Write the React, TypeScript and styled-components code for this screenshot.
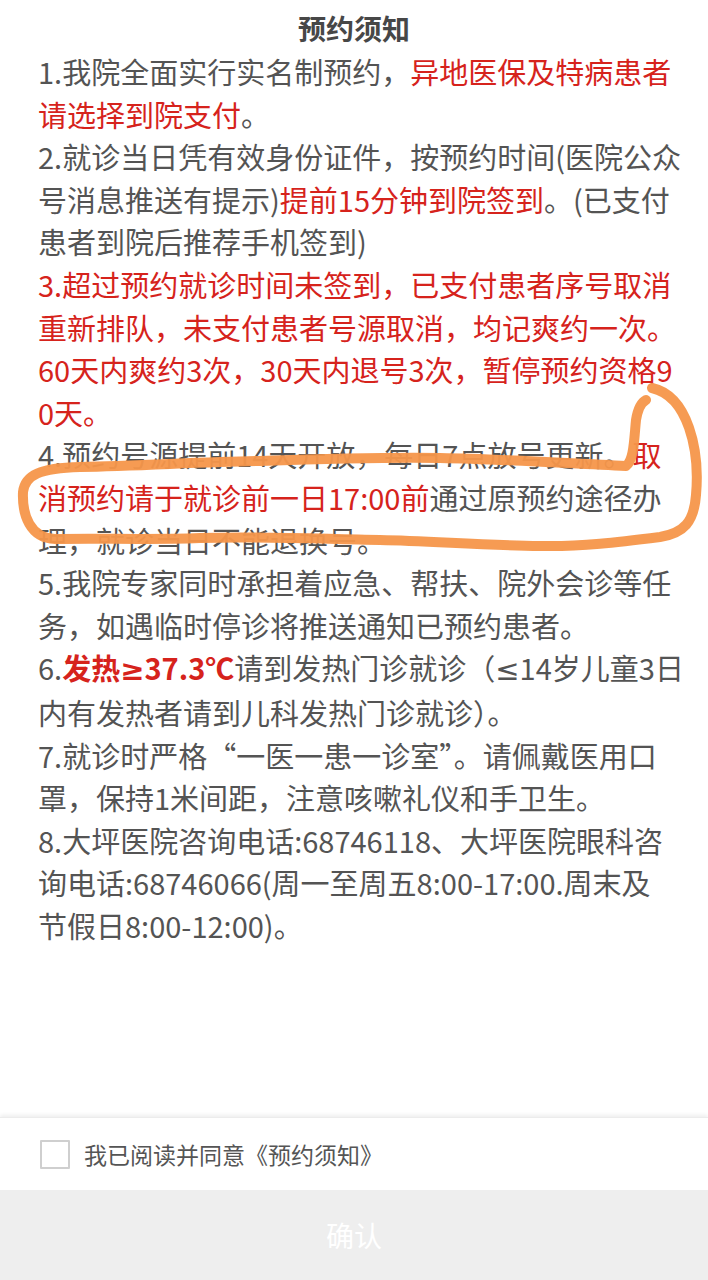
import React from "react";
import styled, { createGlobalStyle } from "styled-components";

const Global = createGlobalStyle`
  html, body { margin: 0; padding: 0; background: #fff; }
  body { font-family: "Noto Sans CJK SC", "Noto Sans", sans-serif; }
  * { box-sizing: border-box; }
`;

const Page = styled.div`
  position: relative;
  width: 708px;
  height: 1280px;
  display: flex;
  flex-direction: column;
  background: #fff;
  overflow: hidden;
`;

const Content = styled.div`
  flex: 1;
  padding: 6px 38px 0 38px;
`;

const Title = styled.h1`
  margin: 0;
  text-align: center;
  font-size: 28px;
  font-weight: 700;
  line-height: 44px;
  color: #474747;
`;

const Item = styled.p`
  margin: 0;
  font-size: 29px;
  line-height: 42.6px;
  color: #545454;
  white-space: nowrap;
`;

const Red = styled.span<{ $bold?: boolean }>`
  color: #d6231c;
  font-weight: ${(p) => (p.$bold ? 700 : 400)};
`;

const Sym = styled.span`
  font-family: "Noto Sans", "DejaVu Sans", sans-serif;
`;

const Footer = styled.div`
  display: flex;
  flex-direction: column;
  box-shadow: 0 -2px 4px rgba(0, 0, 0, 0.07);
  border-top: 1px solid #ececec;
`;

const AgreeRow = styled.label`
  height: 72px;
  display: flex;
  align-items: center;
  gap: 14px;
  padding-left: 40px;
  background: #fff;
`;

const Box = styled.span`
  width: 30px;
  height: 29px;
  border: 2px solid #cfcfcf;
  border-radius: 1px;
  background: #fff;
`;

const AgreeText = styled.span`
  font-size: 23px;
  color: #555;
`;

const Confirm = styled.button`
  height: 90px;
  border: none;
  background: #eeeeee;
  color: #ffffff;
  font-family: "Noto Sans CJK SC", sans-serif;
  font-size: 28px;
  padding: 0;
  margin: 0;
`;

const Scribble = styled.svg`
  position: absolute;
  left: 0;
  top: 0;
  pointer-events: none;
`;

export default function App() {
  return (
    <Page>
      <Global />
      <Content>
        <Title>预约须知</Title>
        <Item>
          1.我院全面实行实名制预约，<Red>异地医保及特病患者<br />请选择到院支付</Red>。
        </Item>
        <Item>
          2.就诊当日凭有效身份证件，按预约时间(医院公众<br />号消息推送有提示)<Red>提前15分钟到院签到</Red>。(已支付<br />患者到院后推荐手机签到)
        </Item>
        <Item>
          <Red>
            3.超过预约就诊时间未签到，已支付患者序号取消<br />重新排队，未支付患者号源取消，均记爽约一次。<br />60天内爽约3次，30天内退号3次，暂停预约资格9<br />0天。
          </Red>
        </Item>
        <Item>
          4.预约号源提前14天开放，每日7点放号更新。<Red>取<br />消预约请于就诊前一日17:00前</Red>通过原预约途径办<br />理，就诊当日不能退换号。
        </Item>
        <Item>
          5.我院专家同时承担着应急、帮扶、院外会诊等任<br />务，如遇临时停诊将推送通知已预约患者。
        </Item>
        <Item>
          6.<Red $bold>发热<Sym>≥</Sym>37.3℃</Red>请到发热门诊就诊（<Sym>≤</Sym>14岁儿童3日<br />内有发热者请到儿科发热门诊就诊）。
        </Item>
        <Item>
          7.就诊时严格“一医一患一诊室”。请佩戴医用口<br />罩，保持1米间距，注意咳嗽礼仪和手卫生。
        </Item>
        <Item>
          8.大坪医院咨询电话:68746118、大坪医院眼科咨<br />询电话:68746066(周一至周五8:00-17:00.周末及<br />节假日8:00-12:00)。
        </Item>
      </Content>
      <Footer>
        <AgreeRow>
          <Box />
          <AgreeText>我已阅读并同意《预约须知》</AgreeText>
        </AgreeRow>
        <Confirm>确认</Confirm>
      </Footer>
      <Scribble width="708" height="1280" viewBox="0 0 708 1280">
        <path
          d="M652 388 C 688 396, 700 450, 696 495 C 694 522, 684 533, 660 537 C 620 542, 580 547, 540 546 C 480 545, 430 541, 380 540 C 320 539, 260 536, 200 538 C 150 540, 100 538, 55 539 C 30 538, 22 515, 23 492 C 25 475, 40 468, 80 467 C 140 466, 200 462, 260 461 C 320 459, 380 457, 440 458 C 500 459, 560 463, 626 466 C 634 460, 634 440, 636 420 C 638 408, 642 402, 646 400"
          fill="none"
          stroke="#f6964a"
          strokeWidth="10"
          strokeLinecap="round"
          strokeLinejoin="round"
          opacity="0.95"
        />
      </Scribble>
    </Page>
  );
}
